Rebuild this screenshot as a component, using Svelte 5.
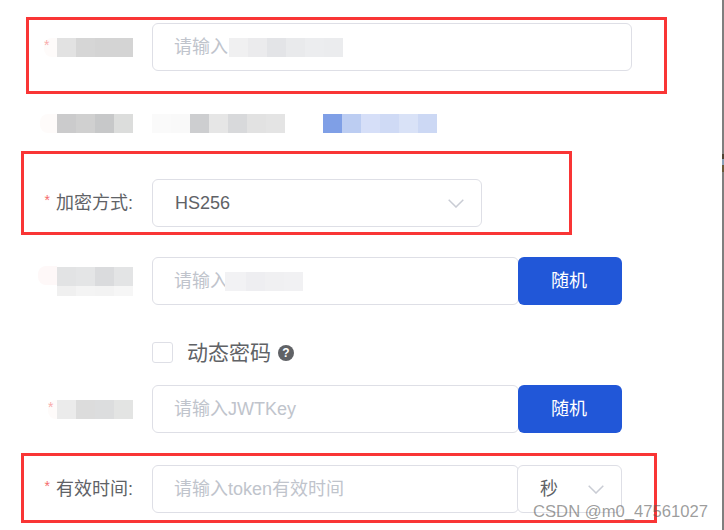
<script>
  const row1Label = ['#e2e2e2', '#d6d6d6', '#d4d4d4', '#d4d4d4'];
  const row1Value = ['#f0f0f1', '#ebebed', '#e3e4e7', '#e9eaec', '#ecedef', '#ebecee'];
  const row2Label = ['#cbcbcc', '#d0d0d0', '#c7c8c9', '#dcdddc'];
  const row2Value = ['#fafafa', '#f9f9f9', '#cdced0', '#e6e6e6', '#d8d9db', '#e2e2e2', '#e4e4e4'];
  const row2Link = ['#7f9fe6', '#bccdf2', '#d6dff8', '#cfdaf5', '#d9e2f7', '#ccd8f4'];
  const row4Label = ['#e2e3e4', '#e4e5e6', '#dadbdd', '#e3e4e5'];
  const row4Under = ['#f0f0f0', '#f4f4f4', '#f3f3f3', '#f6f6f6'];
  const row4Value = ['#f2f2f4', '#eeeef1', '#f0f0f2', '#f1f1f3'];
  const row6Label = ['#ebebeb', '#dcdcdc', '#dcddde', '#e3e4e3'];
</script>

{#snippet mosaic(colors)}
  <span class="mosaic">
    {#each colors as c}
      <i style="background:{c}"></i>
    {/each}
  </span>
{/snippet}

{#snippet chevron()}
  <svg class="chevron" width="16" height="9" viewBox="0 0 16 9" aria-hidden="true">
    <path d="M0.7 0.7 L8 8 L15.3 0.7" fill="none" stroke="#c9ccd4" stroke-width="1.5" />
  </svg>
{/snippet}

<div class="page">
  <form class="form">
    <div class="row r1">
      <div class="label">
        <span class="halo h13"><span class="star faint">*</span></span>
        {@render mosaic(row1Label)}
      </div>
      <div class="input w480">
        <span class="ph">请输入</span>
        <span class="cover">{@render mosaic(row1Value)}</span>
      </div>
    </div>

    <div class="row r2">
      <div class="label">
        <span class="halo h17"></span>
        {@render mosaic(row2Label)}
      </div>
      <div class="static">
        {@render mosaic(row2Value)}
        {@render mosaic(row2Link)}
      </div>
    </div>

    <div class="row r3">
      <div class="label"><span class="star">*</span><span class="cjk">加密方式:</span></div>
      <div class="input w330 select">
        <span class="val">HS256</span>
        {@render chevron()}
      </div>
    </div>

    <div class="row r4">
      <div class="label">
        <span class="halo h19 top"></span>
        <span class="stack">
          {@render mosaic(row4Label)}
          <span class="under">{@render mosaic(row4Under)}</span>
        </span>
      </div>
      <div class="group">
        <div class="input grow">
          <span class="ph">请输入</span>
          <span class="cover4">{@render mosaic(row4Value)}</span>
        </div>
        <button type="button" class="btn">随机</button>
      </div>
    </div>

    <div class="row r5">
      <div class="label"></div>
      <div class="check">
        <span class="box"></span>
        <span class="check-text">动态密码</span>
        <span class="help">?</span>
      </div>
    </div>

    <div class="row r6">
      <div class="label">
        <span class="halo h9"><span class="star faint">*</span></span>
        {@render mosaic(row6Label)}
      </div>
      <div class="group">
        <div class="input grow"><span class="ph">请输入JWTKey</span></div>
        <button type="button" class="btn">随机</button>
      </div>
    </div>

    <div class="row r7">
      <div class="label"><span class="star">*</span><span class="cjk">有效时间:</span></div>
      <div class="group">
        <div class="input grow"><span class="ph">请输入token有效时间</span></div>
        <div class="unit">
          <span class="cjk">秒</span>
          {@render chevron()}
        </div>
      </div>
    </div>
  </form>

  <div class="mark m1"></div>
  <div class="mark m2"></div>
  <div class="mark m3"></div>
  <div class="edge"></div>
  <div class="edge-noise"></div>
  <div class="watermark">CSDN @m0_47561027</div>
</div>

<style>
  :global(body) {
    margin: 0;
    background: #fff;
  }
  .page {
    position: relative;
    width: 724px;
    height: 530px;
    overflow: hidden;
    background: #fff;
    font-family: "Liberation Sans", "Noto Sans CJK SC", sans-serif;
    color: #606266;
    font-size: 18px;
  }
  .form {
    display: flex;
    flex-direction: column;
    padding-top: 23px;
  }
  .row {
    display: flex;
    align-items: center;
    height: 48px;
  }
  .r2 { margin-top: 28px; }
  .r3 { margin-top: 32px; }
  .r4 { margin-top: 30px; }
  .r5 { margin-top: 23px; }
  .r6 { margin-top: 9px; }
  .r7 { margin-top: 32px; }
  .label {
    width: 133px;
    margin-right: 19px;
    display: flex;
    justify-content: flex-end;
    align-items: center;
    flex: none;
    white-space: nowrap;
  }
  .cjk { margin-bottom: 4px; }
  .star {
    color: #f56c6c;
    font-size: 14px;
    margin: 0 6px 6px 0;
    line-height: 1;
  }
  .star.faint {
    opacity: 0.55;
    margin: 0 0 6px 0;
  }
  .halo {
    display: flex;
    align-items: center;
    height: 19px;
    background: #fefbfa;
    border-radius: 8px 0 0 8px;
    margin-top: 1px;
  }
  .h13 { width: 13px; }
  .h17 { width: 17px; }
  .h19 { width: 19px; background: #fef8f8; }
  .h9 { width: 9px; }
  .top { margin: 0 0 11px; }
  .mosaic {
    display: flex;
    flex: none;
    margin-top: 1px;
  }
  .mosaic i {
    display: block;
    width: 19px;
    height: 19px;
  }
  .stack {
    display: flex;
    flex-direction: column;
  }
  .under {
    display: block;
    height: 11px;
    overflow: hidden;
    margin-top: -1px;
  }
  .input {
    box-sizing: border-box;
    height: 48px;
    border: 1px solid #dedfe6;
    border-radius: 6px;
    background: #fff;
    display: flex;
    align-items: center;
    padding: 0 22px;
    white-space: nowrap;
  }
  .w480 { width: 480px; }
  .w330 { width: 330px; }
  .select {
    justify-content: space-between;
    padding-right: 17px;
  }
  .grow { width: 367px; }
  .ph {
    color: #c0c4cc;
    margin: 0 0 4px -1px;
  }
  .cover { margin-left: 1px; }
  .cover4 { margin-left: -3px; }
  .cover4 .mosaic i:first-child { width: 21px; }
  .static {
    display: flex;
    gap: 38px;
  }
  .group {
    display: flex;
    align-items: center;
  }
  .btn {
    box-sizing: border-box;
    width: 104px;
    height: 48px;
    margin-left: -1px;
    border: 0;
    border-radius: 6px;
    background: #2157d8;
    color: #fff;
    font: inherit;
    font-size: 18px;
    padding: 0 2px 4px 0;
  }
  .unit {
    box-sizing: border-box;
    width: 105px;
    height: 48px;
    margin-left: -2px;
    border: 1px solid #dedfe6;
    border-radius: 6px;
    background: #fff;
    display: flex;
    align-items: center;
    justify-content: space-between;
    padding: 0 17px 0 22px;
  }
  .check {
    display: flex;
    align-items: center;
  }
  .box {
    box-sizing: border-box;
    width: 21px;
    height: 21px;
    border: 1px solid #dedfe6;
    border-radius: 3px;
    margin-right: 14px;
  }
  .check-text {
    font-size: 21px;
    margin: 0 7px 2px 0;
  }
  .help {
    width: 16px;
    height: 16px;
    margin-top: 2px;
    border-radius: 50%;
    background: #606266;
    color: #fff;
    font-size: 12px;
    font-weight: 700;
    line-height: 16px;
    text-align: center;
  }
  .mark {
    position: absolute;
    box-sizing: border-box;
    border: 3px solid #f93535;
  }
  .m1 { left: 26px; top: 17px; width: 641px; height: 77px; }
  .m2 { left: 21px; top: 151px; width: 551px; height: 84px; }
  .m3 { left: 21px; top: 453px; width: 636px; height: 70px; }
  .edge {
    position: absolute;
    right: 0;
    top: 0;
    width: 2px;
    height: 530px;
    background: #7f7f7f;
  }
  .edge-noise {
    position: absolute;
    right: 0;
    top: 154px;
    width: 2px;
    height: 18px;
    background: linear-gradient(#4f4434 0 30%, #8aa0b8 30% 60%, #6b5a3a 60% 100%);
  }
  .watermark {
    position: absolute;
    left: 533px;
    top: 502px;
    font-size: 16.65px;
    line-height: 20px;
    color: rgba(90, 90, 90, 0.6);
    white-space: nowrap;
  }
</style>
